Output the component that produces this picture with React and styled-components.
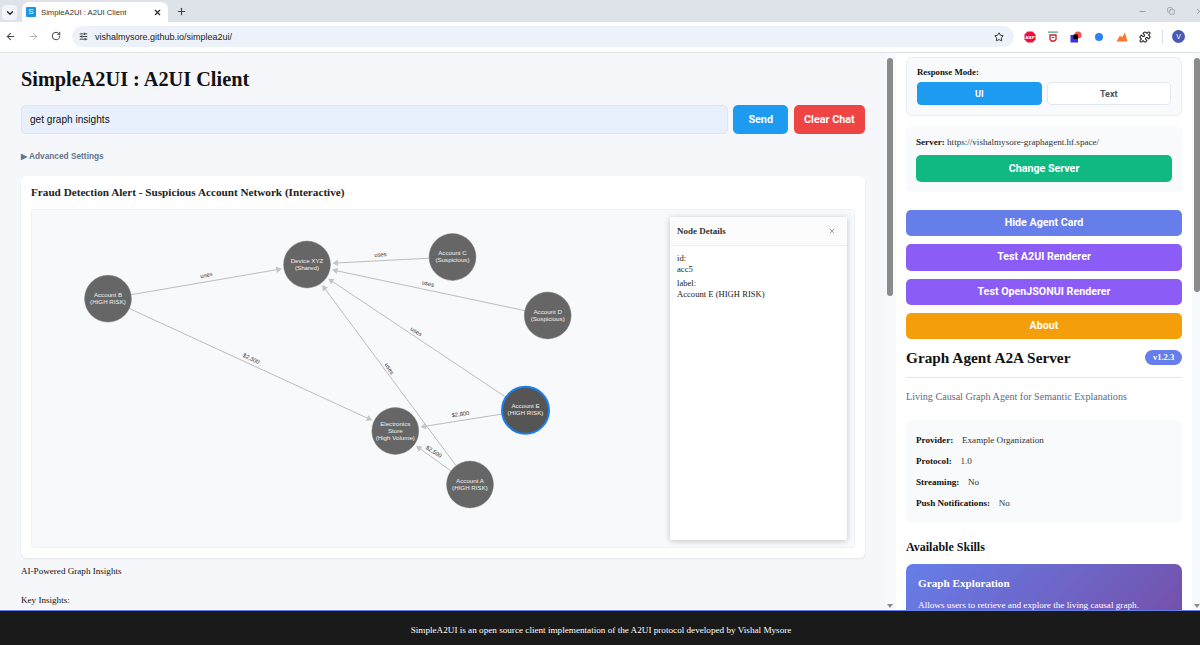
import React from 'react';
import styled, { createGlobalStyle } from 'styled-components';
import {
   ArrowLeft,
   ArrowRight,
   ChevronDown,
   Copy,
   Minus,
   Plus,
   Puzzle,
   RotateCw,
   SlidersHorizontal,
   Star,
   X,
} from 'lucide-react';

const SERIF = '"Liberation Serif", "Times New Roman", serif';
const SANS = '"Liberation Sans", Arial, sans-serif';
const UI = 'Roboto, "Liberation Sans", Arial, sans-serif';

const GlobalStyle = createGlobalStyle`
   html, body { margin: 0; padding: 0; height: 100%; overflow: hidden; background: #f5f7fb; }
   * { box-sizing: border-box; }
`;

const Page = styled.div`
   width: 1200px;
   height: 645px;
   display: flex;
   flex-direction: column;
   overflow: hidden;
   font-family: ${SERIF};
`;

/* browser chrome */
const TabStrip = styled.div`
   height: 22px;
   background: #dee3ea;
   display: flex;
   align-items: flex-end;
   padding-left: 2px;
   flex: none;
`;
const TabMenu = styled.div`
   width: 15px;
   height: 15px;
   margin-bottom: 2px;
   border-radius: 4px;
   background: #f1f4f8;
   display: flex;
   align-items: center;
   justify-content: center;
   color: #222;
`;
const Tab = styled.div`
   width: 146px;
   height: 20px;
   margin-left: 5px;
   background: #fff;
   border-radius: 7px 7px 0 0;
   display: flex;
   align-items: center;
   padding: 0 6px 0 4px;
   font: 7.7px ${SANS};
   color: #333;
`;
const Favicon = styled.span`
   width: 10px;
   height: 10px;
   background: #1b95e0;
   border-radius: 1px;
   color: #fff;
   font: 8px/10px ${SANS};
   text-align: center;
   margin-right: 5px;
`;
const TabTitle = styled.span`
   flex: 1;
`;
const NewTab = styled.div`
   margin: 0 0 5px 8px;
   color: #444;
   display: flex;
`;
const WindowControls = styled.div`
   margin-left: auto;
   align-self: center;
   display: flex;
   gap: 20px;
   margin-right: -4px;
   color: #888;
`;
const Toolbar = styled.div`
   height: 31px;
   background: #fff;
   border-bottom: 1px solid #dfe3e8;
   display: flex;
   align-items: center;
   padding: 0 0 1px 5px;
   flex: none;
   color: #444;
`;
const NavIcons = styled.div`
   display: flex;
   gap: 12px;
   width: 67px;
`;
const Omnibox = styled.div`
   width: 942px;
   height: 21px;
   border-radius: 11px;
   background: #edf2fa;
   display: flex;
   align-items: center;
   padding: 0 10px 0 7px;
   font: 9px ${SANS};
   color: #222;
`;
const Url = styled.span`
   margin-left: 7px;
   flex: 1;
`;
const Extensions = styled.div`
   display: flex;
   align-items: center;
   margin-left: 10px;
   gap: 11px;
`;
const Divider = styled.span`
   width: 1px;
   height: 14px;
   background: #d3e0f2;
`;
const Avatar = styled.span`
   width: 13px;
   height: 13px;
   border-radius: 50%;
   background: #4a59b3;
   color: #fff;
   font: 7px/13px ${SANS};
   text-align: center;
   margin-left: -2px;
`;

/* page body */
const Body = styled.div`
   flex: 1;
   min-height: 0;
   display: flex;
`;
const MainPane = styled.main`
   width: 885px;
   padding: 0 20px 0 21px;
   overflow: hidden;
   flex: none;
`;
const ScrollTrack = styled.div`
   width: ${(p) => p.$width}px;
   flex: none;
   background: #f7f9fc;
   padding-top: 5px;
   position: relative;
`;
const ScrollThumb = styled.div`
   width: 6px;
   height: ${(p) => p.$height}px;
   margin-left: ${(p) => p.$left}px;
   background: #8b8b8b;
   border-radius: 3px;
`;
const ScrollArrow = styled.div`
   position: absolute;
   bottom: 2px;
   left: ${(p) => p.$left}px;
   width: 0;
   height: 0;
   border-left: 3px solid transparent;
   border-right: 3px solid transparent;
   border-top: 4px solid #8b8b8b;
`;
const Title = styled.h1`
   margin: 13px 0 0;
   font: bold 20.3px/26px ${SERIF};
   color: #111;
`;
const InputRow = styled.div`
   display: flex;
   gap: 5.5px;
   margin-top: 13px;
`;
const ChatInput = styled.div`
   flex: 1;
   height: 29px;
   background: #e8f0fe;
   border: 1px solid #dbe4ef;
   border-radius: 5px;
   font: 10.1px/28px ${SANS};
   color: #111;
   padding-left: 8px;
`;
const ChatButton = styled.div`
   width: ${(p) => p.$width}px;
   height: 29px;
   background: ${(p) => p.$bg};
   border-radius: 5px;
   color: #fff;
   font: bold 10.8px/30px ${UI};
   text-align: center;
`;
const Advanced = styled.div`
   margin-top: 16px;
   font: bold 8.3px/12px ${SANS};
   color: #64748b;
`;
const AlertCard = styled.section`
   margin-top: 14px;
   height: 382px;
   background: #fff;
   border-radius: 6px;
   box-shadow: 0 1px 2px rgba(0, 0, 0, 0.08);
   padding: 9px 10px;
`;
const AlertTitle = styled.h3`
   margin: 0;
   font: bold 11.2px/14px ${SERIF};
   color: #222;
`;
const GraphCanvas = styled.div`
   position: relative;
   margin-top: 10px;
   height: 339px;
   background: #f8f9fb;
   border: 1px solid #f0f1f4;
   border-radius: 3px;
`;
const GraphSvg = styled.svg`
   display: block;
   width: 100%;
   height: 100%;
`;
const DetailsPanel = styled.aside`
   position: absolute;
   top: 7px;
   right: 7px;
   width: 177px;
   height: 323px;
   background: #fff;
   box-shadow: 0 1px 6px rgba(0, 0, 0, 0.22);
   border-radius: 2px;
`;
const DetailsHead = styled.div`
   height: 29px;
   background: #fcfcfc;
   border-bottom: 1px solid #eee;
   display: flex;
   align-items: center;
   justify-content: space-between;
   padding: 0 11px 0 7px;
   font: bold 9px ${SERIF};
   color: #333;
`;
const DetailsBody = styled.div`
   padding: 7px 7px;
   font: 8.6px/11px ${SERIF};
   color: #222;
`;
const DetailsValue = styled.div`
   margin-bottom: 3px;
`;
const PlainLine = styled.p`
   margin: ${(p) => p.$top}px 0 0;
   font: 9.1px/14px ${SERIF};
   color: #111;
`;

/* right side */
const SidePane = styled.aside`
   width: 296px;
   flex: none;
   background: #fff;
   padding: 4px 10px 0;
   overflow: hidden;
`;
const Box = styled.div`
   background: #f8fafc;
   border: 1px solid ${(p) => (p.$plain ? '#f8fafc' : '#e8edf3')};
   border-radius: 6px;
   padding: ${(p) => p.$padding};
   margin-bottom: ${(p) => p.$bottom}px;
`;
const ModeLabel = styled.div`
   font: bold 8.8px/12px ${SERIF};
   color: #111;
`;
const ModeRow = styled.div`
   display: flex;
   gap: 5px;
   margin-top: 4px;
`;
const ModeButton = styled.div`
   flex: 1;
   height: 23px;
   border-radius: 4px;
   background: ${(p) => (p.$active ? '#1d9bf0' : '#fff')};
   border: 1px solid ${(p) => (p.$active ? '#1d9bf0' : '#e2e8f0')};
   color: ${(p) => (p.$active ? '#fff' : '#475569')};
   font: bold 9px/22px ${UI};
   text-align: center;
`;
const ServerLine = styled.div`
   font: 9.1px/12px ${SERIF};
   color: #333;
`;
const Strong = styled.b`
   color: #111;
   margin-right: ${(p) => p.$gap || 0}px;
`;
const ActionButton = styled.div`
   height: ${(p) => p.$height || 26.33}px;
   margin-top: ${(p) => p.$top}px;
   background: ${(p) => p.$bg};
   border-radius: 5px;
   color: #fff;
   font: bold 10.7px/${(p) => (p.$height ? 28 : 26)}px ${UI};
   text-align: center;
`;
const AgentHead = styled.div`
   display: flex;
   align-items: center;
   justify-content: space-between;
   margin-top: 8.5px;
   padding-bottom: 9px;
   border-bottom: 1px solid #dfe5ec;
`;
const AgentName = styled.h2`
   margin: 0;
   font: bold 15.3px/20px ${SERIF};
   color: #111;
`;
const Version = styled.span`
   width: 37px;
   height: 15px;
   border-radius: 8px;
   background: #667eea;
   color: #fff;
   font: bold 8.5px/15px ${SERIF};
   text-align: center;
`;
const Subtitle = styled.p`
   margin: 12px 0 16px;
   font: 10.1px/14px ${SERIF};
   color: #5d6b7e;
`;
const InfoRow = styled.div`
   font: 9.1px/12px ${SERIF};
   color: #333;
   margin-bottom: 9px;
   &:last-child {
      margin-bottom: 0;
   }
`;
const SkillsTitle = styled.h3`
   margin: 16px 0 9px;
   font: bold 12px/16px ${SERIF};
   color: #111;
`;
const SkillCard = styled.div`
   height: 90px;
   border-radius: 7px;
   padding: 12px 12px;
   color: #fff;
   background: linear-gradient(135deg, #667eea 0%, #764ba2 100%);
`;
const SkillName = styled.div`
   font: bold 11.2px/14px ${SERIF};
`;
const SkillText = styled.div`
   margin-top: 9px;
   font: 9.2px/12px ${SERIF};
`;
const Footer = styled.footer`
   height: 35px;
   flex: none;
   background: #1a1a1a;
   border-top: 1px solid #667eea;
   color: #fff;
   font: 9.16px/38px ${SERIF};
   text-align: center;
   padding-left: 2px;
`;

const NODES = [
   { x: 306, y: 263.5, lines: ['Device XYZ', '(Shared)'] },
   { x: 451.5, y: 256, lines: ['Account C', '(Suspicious)'] },
   { x: 546.7, y: 314.5, lines: ['Account D', '(Suspicious)'] },
   { x: 107, y: 297.7, lines: ['Account B', '(HIGH RISK)'] },
   { x: 394.3, y: 430, lines: ['Electronics', 'Store', '(High Volume)'] },
   { x: 469, y: 483.5, lines: ['Account A', '(HIGH RISK)'] },
   { x: 524.5, y: 409.3, lines: ['Account E', '(HIGH RISK)'], selected: true },
];

const EDGES = [
   { from: 3, to: 0, label: 'uses', lx: 205.5, ly: 274.5, rot: -12 },
   { from: 1, to: 0, label: 'uses', lx: 379.5, ly: 254, rot: -4 },
   { from: 2, to: 0, label: 'uses', lx: 427, ly: 283, rot: 15 },
   { from: 6, to: 0, label: 'uses', lx: 415, ly: 331, rot: 32 },
   { from: 5, to: 0, label: 'uses', lx: 388, ly: 368, rot: 58 },
   { from: 3, to: 4, label: '$2,300', lx: 250, ly: 358, rot: 26 },
   { from: 6, to: 4, label: '$2,800', lx: 459.5, ly: 413.5, rot: -8 },
   { from: 5, to: 4, label: '$2,500', lx: 432.5, ly: 451, rot: 32 },
];

const edgePoints = (edge) => {
   const a = NODES[edge.from];
   const b = NODES[edge.to];
   const dist = Math.hypot(b.x - a.x, b.y - a.y);
   const ux = (b.x - a.x) / dist;
   const uy = (b.y - a.y) / dist;
   return {
      x1: a.x + ux * 23.5,
      y1: a.y + uy * 23.5,
      x2: b.x - ux * 30,
      y2: b.y - uy * 30,
      tip: (b.x - ux * 25.5) + ',' + (b.y - uy * 25.5),
      left: (b.x - ux * 31 - uy * 3.2) + ',' + (b.y - uy * 31 + ux * 3.2),
      right: (b.x - ux * 31 + uy * 3.2) + ',' + (b.y - uy * 31 - ux * 3.2),
   };
};

const Graph = () => (
   <GraphSvg viewBox='31 209 822 337'>
      {EDGES.map((edge) => {
         const p = edgePoints(edge);
         return (
            <g key={edge.from + '-' + edge.to}>
               <line x1={p.x1} y1={p.y1} x2={p.x2} y2={p.y2} stroke='#bdbdbd' strokeWidth='1' />
               <polygon points={p.tip + ' ' + p.left + ' ' + p.right} fill='#c4c4c4' />
               <text
                  x={edge.lx}
                  y={edge.ly}
                  transform={'rotate(' + edge.rot + ' ' + edge.lx + ' ' + edge.ly + ')'}
                  textAnchor='middle'
                  dominantBaseline='middle'
                  fontFamily={SANS}
                  fontSize='5.8'
                  fill='#333'
               >
                  {edge.label}
               </text>
            </g>
         );
      })}
      {NODES.map((node) => (
         <g key={node.lines[0]}>
            <circle
               cx={node.x}
               cy={node.y}
               r={node.selected ? 23.5 : 23.4}
               fill={node.selected ? '#555' : '#666'}
               stroke={node.selected ? '#1a7ff0' : '#777'}
               strokeWidth={node.selected ? 2 : 0.5}
            />
            {node.lines.map((line, i) => (
               <text
                  key={line}
                  x={node.x}
                  y={node.y + (i - (node.lines.length - 1) / 2) * 7.1}
                  textAnchor='middle'
                  dominantBaseline='middle'
                  fontFamily={SANS}
                  fontSize='6.2'
                  fill='#f2f2f2'
               >
                  {line}
               </text>
            ))}
         </g>
      ))}
   </GraphSvg>
);

const AbpIcon = () => (
   <svg width='12' height='12' viewBox='0 0 12 12'>
      <polygon points='3.5,0.5 8.5,0.5 11.5,3.5 11.5,8.5 8.5,11.5 3.5,11.5 0.5,8.5 0.5,3.5' fill='#e8133d' />
      <text x='6' y='7.8' textAnchor='middle' fontFamily={SANS} fontWeight='bold' fontSize='4.4' fill='#fff'>
         ABP
      </text>
   </svg>
);
const ShieldIcon = () => (
   <svg width='12' height='12' viewBox='0 0 12 12'>
      <rect x='1' y='0.5' width='10' height='1.2' fill='#3aa28c' />
      <path d='M3 4h6v4.5L7.6 10H4.4L3 8.5z' fill='none' stroke='#d81e2c' strokeWidth='1.3' />
      <path d='M4.8 6.5h2.4' stroke='#d81e2c' strokeWidth='1' />
   </svg>
);
const SquaresIcon = () => (
   <svg width='12' height='12' viewBox='0 0 12 12'>
      <circle cx='8' cy='4' r='3.6' fill='#f0564f' />
      <rect x='0.5' y='4' width='7.5' height='7.5' fill='#3b2fe0' />
      <rect x='3.5' y='3.5' width='4.5' height='4.5' fill='#000' />
   </svg>
);
const DotIcon = () => (
   <svg width='12' height='12' viewBox='0 0 12 12'>
      <circle cx='6' cy='6' r='4' fill='#2b83f6' />
   </svg>
);
const PeakIcon = () => (
   <svg width='12' height='12' viewBox='0 0 12 12'>
      <path d='M0.5 10.5L4 4.5l2 2L9 1.5l2.5 9z' fill='#f4792b' />
   </svg>
);

const App = () => (
   <Page>
      <GlobalStyle />
      <TabStrip>
         <TabMenu>
            <ChevronDown size={10} strokeWidth={3} />
         </TabMenu>
         <Tab>
            <Favicon>S</Favicon>
            <TabTitle>SimpleA2UI : A2UI Client</TabTitle>
            <X size={9} strokeWidth={3} color='#222' />
         </Tab>
         <NewTab>
            <Plus size={11} strokeWidth={2.5} />
         </NewTab>
         <WindowControls>
            <Minus size={9} />
            <Copy size={8} />
            <X size={9} />
         </WindowControls>
      </TabStrip>
      <Toolbar>
         <NavIcons>
            <ArrowLeft size={11} strokeWidth={2.2} />
            <ArrowRight size={11} strokeWidth={2} color='#a9adb3' />
            <RotateCw size={10} strokeWidth={2.4} />
         </NavIcons>
         <Omnibox>
            <SlidersHorizontal size={9} strokeWidth={2.4} />
            <Url>vishalmysore.github.io/simplea2ui/</Url>
            <Star size={10} strokeWidth={2.2} />
         </Omnibox>
         <Extensions>
            <AbpIcon />
            <ShieldIcon />
            <SquaresIcon />
            <DotIcon />
            <PeakIcon />
            <Puzzle size={12} strokeWidth={2.2} color='#222' />
            <Divider />
            <Avatar>V</Avatar>
         </Extensions>
      </Toolbar>
      <Body>
         <MainPane>
            <Title>SimpleA2UI : A2UI Client</Title>
            <InputRow>
               <ChatInput>get graph insights</ChatInput>
               <ChatButton $width={55} $bg='#1d9bf0'>
                  Send
               </ChatButton>
               <ChatButton $width={71.3} $bg='#ef4444'>
                  Clear Chat
               </ChatButton>
            </InputRow>
            <Advanced>▶ Advanced Settings</Advanced>
            <AlertCard>
               <AlertTitle>Fraud Detection Alert - Suspicious Account Network (Interactive)</AlertTitle>
               <GraphCanvas>
                  <Graph />
                  <DetailsPanel>
                     <DetailsHead>
                        Node Details
                        <X size={8} color='#666' />
                     </DetailsHead>
                     <DetailsBody>
                        <div>id:</div>
                        <DetailsValue>acc5</DetailsValue>
                        <div>label:</div>
                        <DetailsValue>Account E (HIGH RISK)</DetailsValue>
                     </DetailsBody>
                  </DetailsPanel>
               </GraphCanvas>
            </AlertCard>
            <PlainLine $top={6}>AI-Powered Graph Insights</PlainLine>
            <PlainLine $top={15}>Key Insights:</PlainLine>
         </MainPane>
         <ScrollTrack $width={11}>
            <ScrollThumb $height={238} $left={2} />
            <ScrollArrow $left={2} />
         </ScrollTrack>
         <SidePane>
            <Box $padding='8px 10px 10px' $bottom={10}>
               <ModeLabel>Response Mode:</ModeLabel>
               <ModeRow>
                  <ModeButton $active>UI</ModeButton>
                  <ModeButton>Text</ModeButton>
               </ModeRow>
            </Box>
            <Box $plain $padding='9px 9px 9px' $bottom={0}>
               <ServerLine>
                  <Strong>Server:</Strong> https://vishalmysore-graphagent.hf.space/
               </ServerLine>
               <ActionButton $top={7} $height={27} $bg='#10b981'>
                  Change Server
               </ActionButton>
            </Box>
            <ActionButton $top={18} $bg='#667eea'>
               Hide Agent Card
            </ActionButton>
            <ActionButton $top={8} $bg='#8b5cf6'>
               Test A2UI Renderer
            </ActionButton>
            <ActionButton $top={8} $bg='#8b5cf6'>
               Test OpenJSONUI Renderer
            </ActionButton>
            <ActionButton $top={8} $bg='#f59e0b'>
               About
            </ActionButton>
            <AgentHead>
               <AgentName>Graph Agent A2A Server</AgentName>
               <Version>v1.2.3</Version>
            </AgentHead>
            <Subtitle>Living Causal Graph Agent for Semantic Explanations</Subtitle>
            <Box $plain $padding='13px 9px' $bottom={0}>
               <InfoRow>
                  <Strong $gap={6.5}>Provider:</Strong> Example Organization
               </InfoRow>
               <InfoRow>
                  <Strong $gap={6.5}>Protocol:</Strong> 1.0
               </InfoRow>
               <InfoRow>
                  <Strong $gap={6.5}>Streaming:</Strong> No
               </InfoRow>
               <InfoRow>
                  <Strong $gap={6.5}>Push Notifications:</Strong> No
               </InfoRow>
            </Box>
            <SkillsTitle>Available Skills</SkillsTitle>
            <SkillCard>
               <SkillName>Graph Exploration</SkillName>
               <SkillText>Allows users to retrieve and explore the living causal graph.</SkillText>
            </SkillCard>
         </SidePane>
         <ScrollTrack $width={8}>
            <ScrollThumb $height={234} $left={2} />
            <ScrollArrow $left={2} />
         </ScrollTrack>
      </Body>
      <Footer>SimpleA2UI is an open source client implementation of the A2UI protocol developed by Vishal Mysore</Footer>
   </Page>
);

export default App;
